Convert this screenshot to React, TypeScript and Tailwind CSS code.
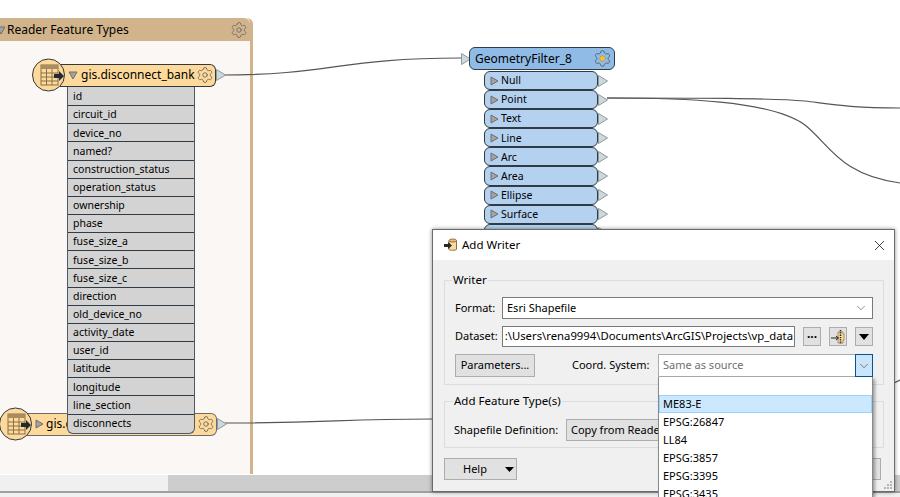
import { Settings, X, ChevronDown } from "lucide-react";

const attributes = [
    "id",
    "circuit_id",
    "device_no",
    "named?",
    "construction_status",
    "operation_status",
    "ownership",
    "phase",
    "fuse_size_a",
    "fuse_size_b",
    "fuse_size_c",
    "direction",
    "old_device_no",
    "activity_date",
    "user_id",
    "latitude",
    "longitude",
    "line_section",
    "disconnects",
];

const ports = ["Null", "Point", "Text", "Line", "Arc", "Area", "Ellipse", "Surface", ""];

const coordSystems = ["EPSG:26847", "LL84", "EPSG:3857", "EPSG:3395", "EPSG:3435"];

function Triangle({ dir }: { dir: "down" | "right" }) {
    return (
        <svg width="10" height="10" viewBox="0 0 10 10" className="shrink-0">
            <polygon
                points={dir === "down" ? "1,2 9,2 5,9" : "2,1 9,5 2,9"}
                fill="#a3a3a3"
                stroke="#6f6f6f"
                strokeWidth="1"
            />
        </svg>
    );
}

function PortArrow() {
    return (
        <svg width="10" height="12" viewBox="0 0 10 12" className="shrink-0">
            <polygon points="0.5,0.5 9.5,6 0.5,11.5" fill="#cbd8dd" stroke="#8f9a9e" strokeWidth="1" />
        </svg>
    );
}

function TableIcon() {
    return (
        <svg width="33" height="34" viewBox="0 0 33 34" className="relative z-10 shrink-0">
            <circle cx="16.5" cy="17" r="16" fill="#fdd99b" stroke="#33383d" strokeWidth="1" />
            <rect x="9" y="7" width="17" height="20" fill="#fdd99b" stroke="#8a7048" strokeWidth="1" />
            <rect x="9" y="7" width="17" height="4" fill="#a98c5f" />
            <path d="M9 15h17M9 19h17M9 23h17M14.5 11v16M20 11v16" stroke="#8a7048" strokeWidth="1" />
            <path d="M22 16h5v-3l5 5-5 5v-3h-5z" fill="#222a30" />
        </svg>
    );
}

function Canvas() {
    return (
        <div className="relative flex-1 overflow-hidden bg-white">
            <div className="absolute left-[-10px] top-[18px] flex h-[456px] w-[263px] flex-col rounded-t-md border-r-[3px] border-[#d2b48c] bg-[#fbf7f4]">
                <div className="flex h-[23px] items-center justify-between rounded-t-md bg-[#d2b48c] pl-[6px] pr-[2px]">
                    <div className="flex items-center gap-[1px]">
                        <Triangle dir="down" />
                        <span className="text-[12px] text-black">Reader Feature Types</span>
                    </div>
                    <Settings size={18} strokeWidth={1} color="#5f5f5f" />
                </div>
            </div>

            <svg className="absolute inset-0" width="900" height="475" fill="none" stroke="#555" strokeWidth="1.2">
                <path d="M222 75 C 330 75 340 58 461 58" />
                <path d="M607 98 C 700 98 770 98 805 101 C 830 104 850 108 900 108" />
                <path d="M607 98 C 680 98 770 100 805 125 C 830 145 840 175 900 183" />
                <path d="M222 423 C 330 423 340 419 432 419" />
                <path d="M894 383 L 900 380" />
            </svg>

            <div className="absolute left-[32px] top-[58px] flex items-center">
                <TableIcon />
                <div className="ml-[-5px] flex h-[23px] w-[156px] items-center rounded-r-md border border-l-0 border-[#33383d] bg-[#fdd99b] pl-[8px] pr-[1px]">
                    <Triangle dir="down" />
                    <span className="ml-[3px] text-[12px] leading-none text-black">gis.disconnect_bank</span>
                    <Settings size={18} strokeWidth={1} color="#555" className="ml-auto" />
                </div>
                <PortArrow />
            </div>

            <div className="absolute left-[-1px] top-[407px] flex items-center">
                <TableIcon />
                <div className="ml-[-5px] flex h-[23px] w-[190px] items-center rounded-r-md border border-l-0 border-[#6c6c6c] bg-[#fdd99b] pl-[7px] pr-[1px]">
                    <Triangle dir="right" />
                    <span className="ml-[2px] text-[12px] leading-none text-black">gis.d</span>
                    <Settings size={18} strokeWidth={1} color="#555" className="ml-auto" />
                </div>
                <PortArrow />
            </div>

            <div className="absolute left-[67px] top-[87px] w-[128px] overflow-hidden rounded-b-md border-x border-b border-[#4d5963] bg-[#d3d3d3] pt-[1px]">
                {attributes.map((a) => (
                    <div
                        key={a}
                        className="flex h-[18.15px] items-center border-b border-[#2f3b45] pl-[5px] text-[10.5px] leading-none text-black last:border-b-0"
                    >
                        {a}
                    </div>
                ))}
            </div>

            <div className="absolute left-[461px] top-[47px] flex flex-col">
                <div className="mb-[1px] flex items-center">
                    <PortArrow />
                    <div className="ml-[-2px] flex h-[23px] w-[146px] items-center justify-between rounded-md border border-[#2f3b45] bg-[#8fbbe6] pl-[5px] pr-[2px] text-[12px] text-black">
                        GeometryFilter_8
                        <Settings size={19} strokeWidth={1} color="#555">
                            <circle cx="12" cy="12" r="3.2" fill="#fcc419" stroke="none" />
                        </Settings>
                    </div>
                </div>
                {ports.map((p) => (
                    <div key={p} className="ml-[23px] flex items-center">
                        <div className="flex h-[19.1px] w-[114px] items-center rounded-md border border-[#2f3b45] bg-[#b4d2ef] pl-[4px] text-[10.5px] leading-none text-black">
                            <Triangle dir="right" />
                            <span className="ml-[2px]">{p}</span>
                        </div>
                        <PortArrow />
                    </div>
                ))}
            </div>
        </div>
    );
}

function Field({ children, className }: { children: React.ReactNode; className: string }) {
    return (
        <div className={"flex items-center border border-[#7a7a7a] bg-white text-[11px] text-black " + className}>
            {children}
        </div>
    );
}

function SmallButton({ children }: { children: React.ReactNode }) {
    return (
        <div className="flex h-[19px] w-[18px] items-center justify-center border border-[#adadad] bg-[#e1e1e1]">
            {children}
        </div>
    );
}

function Dialog() {
    return (
        <div className="absolute left-[432px] top-[229px] z-10 h-[263px] w-[463px] whitespace-nowrap border border-[#6b6b6b] bg-[#f0f0f0] text-[11px] text-black shadow-[0_0_4px_rgba(0,0,0,0.45)]">
            <div className="flex h-[30px] items-center justify-between bg-white pl-[10px] pr-[6px]">
                <div className="flex items-center gap-[3px]">
                    <svg width="16" height="16" viewBox="0 0 16 16">
                        <path d="M6 3.5v9c0 1 7.5 1 7.5 0v-9z" fill="#fdd99b" stroke="#8a7048" />
                        <ellipse cx="9.75" cy="3.5" rx="3.75" ry="1.5" fill="#e8c078" stroke="#8a7048" />
                        <path d="M1 7h4V5l4 3.5L5 12v-2H1z" fill="#222a30" />
                    </svg>
                    <span className="text-[11.5px]">Add Writer</span>
                </div>
                <X size={17} strokeWidth={1.1} color="#111" />
            </div>

            <div className="px-[11px] pt-[12px]">
                <fieldset className="mr-[-1px] border border-[#dcdcdc] px-[10px] pb-[7px] pt-[9px]">
                    <legend className="ml-[-3px] px-[1px] text-[11.5px] leading-[16px]">Writer</legend>
                    <div className="flex items-center">
                        <span className="w-[47px]">Format:</span>
                        <Field className="h-[22px] w-[371px] justify-between pl-[4px] pr-[4px]">
                            Esri Shapefile
                            <ChevronDown size={14} strokeWidth={1} color="#444" />
                        </Field>
                    </div>
                    <div className="mt-[7px] flex items-center">
                        <span className="w-[47px]">Dataset:</span>
                        <Field className="h-[21px] w-[293px] justify-end overflow-hidden pr-[1px]">
                            <span className="text-[11.3px]">:\Users\rena9994\Documents\ArcGIS\Projects\vp_data</span>
                        </Field>
                        <div className="ml-[8px] flex gap-[8px]">
                            <SmallButton>
                                <span className="mt-[-5px] text-[12px] font-bold leading-none">...</span>
                            </SmallButton>
                            <SmallButton>
                                <svg width="16" height="16" viewBox="0 0 16 16">
                                    <path d="M8 3h5v2h1v6h-1v3H8z" fill="#fdd99b" stroke="#8a7048" strokeWidth="0.7" />
                                    <path d="M10.5 1v14" stroke="#222" strokeWidth="1.5" strokeDasharray="1.3 1" />
                                    <path d="M1 9h7M6 7l2.5 2L6 11" fill="none" stroke="#222" strokeWidth="1" />
                                </svg>
                            </SmallButton>
                            <SmallButton>
                                <svg width="10" height="6" viewBox="0 0 10 6">
                                    <polygon points="0,0 10,0 5,6" fill="#000" />
                                </svg>
                            </SmallButton>
                        </div>
                    </div>
                    <div className="mt-[7px] flex items-center">
                        <div className="flex h-[23px] w-[80px] items-center justify-center border border-[#adadad] bg-[#e1e1e1]">
                            Parameters...
                        </div>
                        <span className="ml-[37px] w-[86px]">Coord. System:</span>
                        <div className="flex h-[23px] w-[215px] items-center justify-between border border-[#ababab] bg-white pl-[4px] text-[#6f6f6f]">
                            Same as source
                            <div className="mr-[-1px] flex h-[23px] w-[18px] items-center justify-center border border-[#005499] bg-[#cce4f7]">
                                <ChevronDown size={14} strokeWidth={1} color="#333" />
                            </div>
                        </div>
                    </div>
                </fieldset>

                <fieldset className="mr-[-1px] mt-[8px] border border-[#dcdcdc] px-[9px] pb-[6px] pt-[10px]">
                    <legend className="ml-[-1px] px-[1px] text-[11.5px] leading-[16px]">Add Feature Type(s)</legend>
                    <div className="flex items-center">
                        <span className="w-[112px]">Shapefile Definition:</span>
                        <div className="flex h-[22px] w-[307px] items-center border border-[#adadad] bg-[#e1e1e1] pl-[4px]">
                            Copy from Reader
                        </div>
                    </div>
                </fieldset>

                <div className="mt-[10px] flex items-center justify-between pr-[2px]">
                    <div className="flex h-[22px] w-[73px] items-center border border-[#adadad] bg-[#e1e1e1] pl-[18px]">
                        Help
                        <svg width="9" height="5" viewBox="0 0 9 5" className="ml-[18px]">
                            <polygon points="0,0 9,0 4.5,5" fill="#000" />
                        </svg>
                    </div>
                    <div className="h-[22px] w-[75px] border border-[#adadad] bg-[#e1e1e1]" />
                </div>
            </div>

            <svg width="10" height="10" viewBox="0 0 10 10" fill="#b5b5b5" className="absolute bottom-[1px] right-[1px]">
                <rect x="7" y="1" width="2" height="2" />
                <rect x="4" y="4" width="2" height="2" />
                <rect x="7" y="4" width="2" height="2" />
                <rect x="1" y="7" width="2" height="2" />
                <rect x="4" y="7" width="2" height="2" />
                <rect x="7" y="7" width="2" height="2" />
            </svg>

            <div className="absolute left-[225px] top-[147px] h-[120px] w-[215px] overflow-hidden border-x border-[#8a8a8a] bg-white pt-[18px] shadow-[2px_2px_3px_rgba(0,0,0,0.35)]">
                <div className="flex h-[18px] items-center border border-[#99d1ff] bg-[#cce8ff] pl-[3px]">ME83-E</div>
                {coordSystems.map((c) => (
                    <div key={c} className="flex h-[18px] items-center pl-[4px]">
                        {c}
                    </div>
                ))}
            </div>
        </div>
    );
}

export default function App() {
    return (
        <div className="relative flex h-[497px] w-[900px] flex-col overflow-hidden bg-[#f0f0f0] font-['Noto_Sans',sans-serif]">
            <Canvas />
            <div className="flex h-[16px] bg-[#f0f0f0]">
                <div className="w-[168px]" />
                <div className="flex-1 bg-[#cdcdcd]" />
            </div>
            <div className="h-[6px] border-t-2 border-[#a0a0a0] bg-[#f0f0f0]" />
            <Dialog />
        </div>
    );
}
